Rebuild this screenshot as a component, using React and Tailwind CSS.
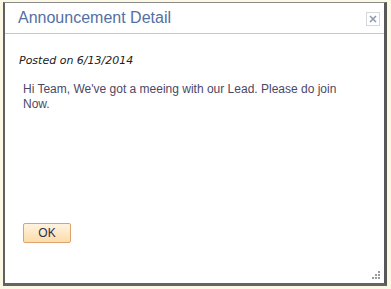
import React from 'react';

export default function App() {
  return (
    <div className="w-[391px] h-[289px] bg-[#fbf9e6] pt-[2px] pl-[3px]">
      <div className="w-[384px] h-[284px] bg-white border-l-2 border-t border-r-[3px] border-b-[3px] border-l-[#606060] border-t-[#8a8a8a] border-r-[#585858] border-b-[#646464] flex flex-col relative font-['Liberation_Sans',Arial,sans-serif]">
        {/* Header */}
        <div className="h-[31px] flex items-center justify-between pl-[13px] pr-[4px] border-b border-[#c8c8c8]">
          <span className="text-[16px] text-[#5370a3] leading-none">Announcement Detail</span>
          <button className="w-[14px] h-[14px] border border-[#d4d8dc] flex items-center justify-center mt-[1px]">
            <svg width="8" height="8" viewBox="0 0 8 8">
              <path d="M1 1 L7 7 M7 1 L1 7" stroke="#8c9bb0" strokeWidth="1.6" />
            </svg>
          </button>
        </div>

        {/* Body */}
        <div className="flex flex-col flex-1 pl-[14px]">
          <p className="mt-[20px] text-[11px] italic text-[#222] font-['DejaVu_Sans',Verdana,sans-serif] leading-[14px]">
            Posted on 6/13/2014
          </p>
          <p className="mt-[14px] pl-[4px] text-[12px] text-[#4b4866] leading-[15px] w-[340px]">
            Hi Team, We've got a meeing with our Lead. Please do join Now.
          </p>
          <div className="mt-[108px] pl-[4px]">
            <button className="w-[48px] h-[20px] rounded-[2px] border border-[#dea36a] bg-gradient-to-b from-[#fff3e0] to-[#fcdcaa] text-[12px] text-[#2f2f4f] leading-none">
              OK
            </button>
          </div>
        </div>

        {/* Resize grip */}
        <svg className="absolute right-[3px] bottom-[3px]" width="10" height="10" viewBox="0 0 10 10">
          <rect x="7" y="1" width="2" height="2" fill="#9a9a9a" />
          <rect x="4" y="4" width="2" height="2" fill="#9a9a9a" />
          <rect x="7" y="4" width="2" height="2" fill="#9a9a9a" />
          <rect x="1" y="7" width="2" height="2" fill="#9a9a9a" />
          <rect x="4" y="7" width="2" height="2" fill="#9a9a9a" />
          <rect x="7" y="7" width="2" height="2" fill="#9a9a9a" />
        </svg>
      </div>
    </div>
  );
}
